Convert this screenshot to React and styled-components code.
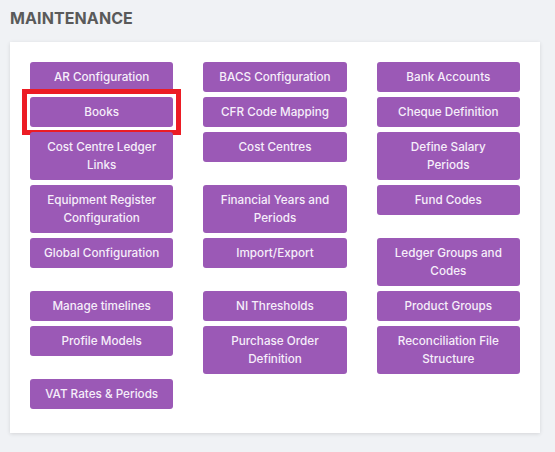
import React from 'react'
import styled, { createGlobalStyle } from 'styled-components'

const GlobalStyle = createGlobalStyle`
  body {
    margin: 0;
    background: #f0f2f5;
    font-family: Inter, "Noto Sans", sans-serif;
  }
`;

const Page = styled.div`
  padding: 8px 15px 18px 10px;
`;

const Title = styled.h2`
  margin: 0 0 14px;
  font-size: 16px;
  line-height: 20px;
  font-weight: 700;
  color: #5a5a5a;
  letter-spacing: 0.1px;
`;

const Card = styled.div`
  background: #fff;
  box-shadow: 0 1px 4px rgba(0, 0, 0, 0.12);
  padding: 20px 20px 24px;
`;

const Grid = styled.div`
  display: grid;
  grid-template-columns: repeat(3, 1fr);
  column-gap: 30px;
  row-gap: 5px;
  align-items: start;
`;

const Tile = styled.button`
  position: relative;
  display: block;
  width: 100%;
  min-height: 30px;
  padding: 6px 12px;
  border: none;
  border-radius: 3px;
  background: #9b59b6;
  color: #f6eefa;
  font-family: Inter, "Noto Sans", sans-serif;
  font-size: 11.7px;
  font-weight: 500;
  line-height: 18px;
  text-align: center;
  cursor: pointer;

  /* red marker drawn over the highlighted tile */
  &::after {
    content: "";
    display: ${props => props.$highlighted ? 'block' : 'none'};
    position: absolute;
    inset: -8px;
    border: 5px solid #ec1c24;
    pointer-events: none;
  }
`;

const items = [
  'AR Configuration', 'BACS Configuration', 'Bank Accounts',
  'Books', 'CFR Code Mapping', 'Cheque Definition',
  'Cost Centre Ledger Links', 'Cost Centres', 'Define Salary Periods',
  'Equipment Register Configuration', 'Financial Years and Periods', 'Fund Codes',
  'Global Configuration', 'Import/Export', 'Ledger Groups and Codes',
  'Manage timelines', 'NI Thresholds', 'Product Groups',
  'Profile Models', 'Purchase Order Definition', 'Reconciliation File Structure',
  'VAT Rates & Periods',
];

const App = () => {
  return (
    <Page>
      <GlobalStyle />
      <Title>MAINTENANCE</Title>
      <Card>
        <Grid>
          {items.map(item => (
            <Tile key={item} $highlighted={item === 'Books'}>{item}</Tile>
          ))}
        </Grid>
      </Card>
    </Page>
  )
}

export default App
